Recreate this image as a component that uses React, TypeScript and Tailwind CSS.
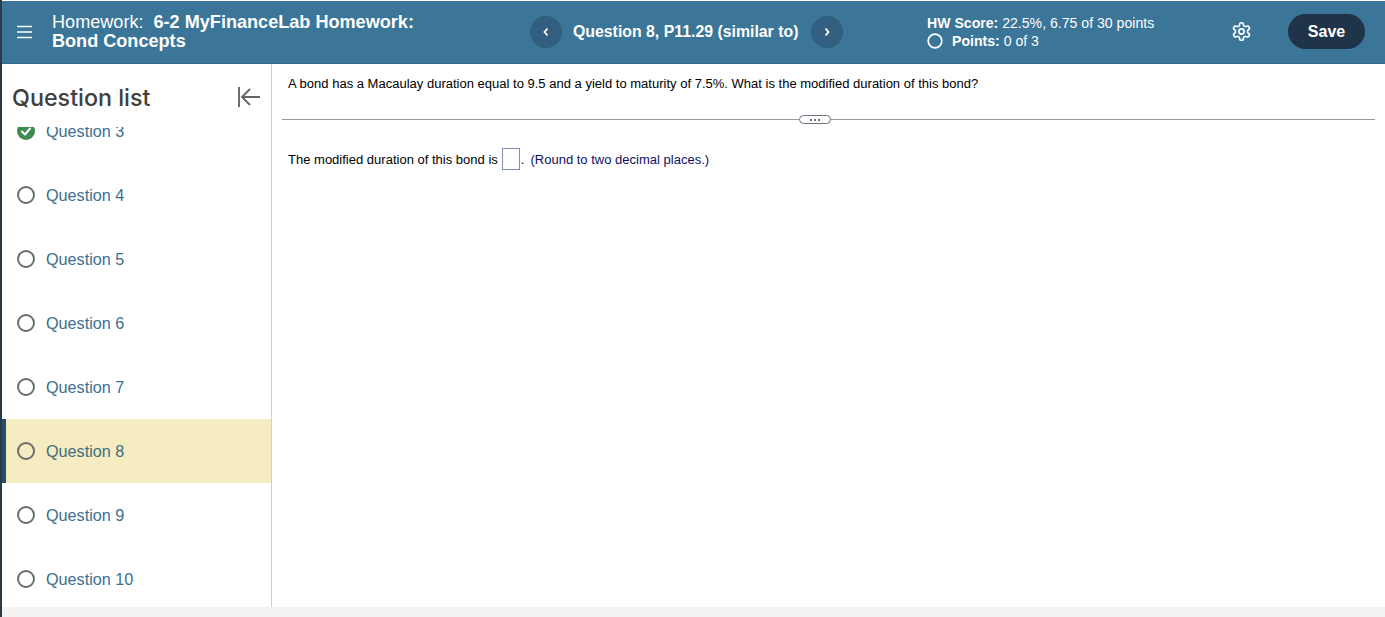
import React from "react";

const Circle = ({ color = "#6b6b6b" }: { color?: string }) => (
  <svg width="20" height="20" viewBox="0 0 20 20" fill="none" className="shrink-0">
    <circle cx="10" cy="10" r="8" stroke={color} strokeWidth="2" />
  </svg>
);

const Check = () => (
  <svg width="20" height="20" viewBox="0 0 20 20" className="shrink-0">
    <circle cx="10" cy="10" r="9" fill="#3d8b4f" />
    <path d="M6 10.5l3 3 5-6" fill="none" stroke="#fff" strokeWidth="2" strokeLinecap="round" strokeLinejoin="round" />
  </svg>
);

const Row = ({ n, active, done }: { n: number; active?: boolean; done?: boolean }) => (
  <div className={`h-16 shrink-0 flex items-center gap-[10px] pl-[14px] ${active ? "bg-[#f6ecc2]" : ""}`}>
    {done ? <Check /> : <Circle />}
    <span className={`text-[16.2px] pt-px ${active ? "text-[#3d6f7f]" : "text-[#3a708f]"}`}>Question {n}</span>
  </div>
);

export default function App() {
  return (
    <div className="h-[617px] w-[1385px] flex overflow-hidden bg-white text-black font-['Liberation_Sans',sans-serif]">
      <div className="w-[2px] shrink-0 bg-[#2b3a45]" />
      <div className="flex-1 min-w-0 flex flex-col">
        <header className="h-[63px] mt-px shrink-0 bg-[#3b7598] border-b border-[#356a8a] flex items-center text-white">
          <div className="w-[50px] shrink-0 flex justify-center pr-[6px]">
            <svg width="15" height="14" viewBox="0 0 15 14" stroke="#fff" strokeWidth="1.6" fill="none">
              <path d="M0 1.5h15M0 7h15M0 12.5h15" />
            </svg>
          </div>
          <div className="w-[478px] shrink-0 text-[18.1px] leading-[19px]">
            <div>
              Homework: <span className="font-bold ml-[5px]">6-2 MyFinanceLab Homework:</span>
            </div>
            <div className="font-bold">Bond Concepts</div>
          </div>
          <div className="flex items-center w-[397px] shrink-0">
            <div className="w-8 h-8 rounded-full bg-[#315f7d] flex items-center justify-center">
              <svg width="8" height="10" viewBox="0 0 8 10" fill="none" stroke="#fff" strokeWidth="1.8"><path d="M5.5 1.5L2.5 5l3 3.5" /></svg>
            </div>
            <div className="ml-[11px] w-[238px] text-[15.85px] font-bold whitespace-nowrap">Question 8, P11.29 (similar to)</div>
            <div className="w-8 h-8 rounded-full bg-[#315f7d] flex items-center justify-center">
              <svg width="8" height="10" viewBox="0 0 8 10" fill="none" stroke="#fff" strokeWidth="1.8"><path d="M2.5 1.5L5.5 5l-3 3.5" /></svg>
            </div>
          </div>
          <div className="w-[304px] shrink-0 text-[14.1px] leading-[18px]">
            <div><span className="font-bold">HW Score:</span> 22.5%, 6.75 of 30 points</div>
            <div className="flex items-center">
              <svg width="16" height="16" viewBox="0 0 16 16" fill="none" className="mr-[9px]"><circle cx="8" cy="8" r="6.8" stroke="#fff" strokeWidth="1.7" /></svg>
              <span className="font-bold">Points:</span>&nbsp;0 of 3
            </div>
          </div>
          <svg width="21" height="21" viewBox="0 0 24 24" fill="none" stroke="#fff" strokeWidth="1.9" strokeLinecap="round" strokeLinejoin="round" className="shrink-0 mb-px">
            <path d="M12.22 2h-.44a2 2 0 0 0-2 2v.18a2 2 0 0 1-1 1.73l-.43.25a2 2 0 0 1-2 0l-.15-.08a2 2 0 0 0-2.73.73l-.22.38a2 2 0 0 0 .73 2.73l.15.1a2 2 0 0 1 1 1.72v.51a2 2 0 0 1-1 1.74l-.15.09a2 2 0 0 0-.73 2.73l.22.38a2 2 0 0 0 2.73.73l.15-.08a2 2 0 0 1 2 0l.43.25a2 2 0 0 1 1 1.73V20a2 2 0 0 0 2 2h.44a2 2 0 0 0 2-2v-.18a2 2 0 0 1 1-1.73l.43-.25a2 2 0 0 1 2 0l.15.08a2 2 0 0 0 2.73-.73l.22-.39a2 2 0 0 0-.73-2.73l-.15-.08a2 2 0 0 1-1-1.74v-.5a2 2 0 0 1 1-1.74l.15-.09a2 2 0 0 0 .73-2.73l-.22-.38a2 2 0 0 0-2.73-.73l-.15.08a2 2 0 0 1-2 0l-.43-.25a2 2 0 0 1-1-1.73V4a2 2 0 0 0-2-2z" />
            <circle cx="12" cy="12" r="3" />
          </svg>
          <button className="ml-[36px] mb-px w-[77px] h-[35px] rounded-full bg-[#1f3448] text-white text-[16px] font-bold">Save</button>
        </header>
        <div className="flex-1 min-h-0 flex">
          <aside className="w-[270px] shrink-0 border-r border-[#cfcfcf] flex flex-col">
            <div className="h-[63px] shrink-0 flex items-start justify-between pl-[10px] pr-[9px] pt-[19px]">
              <h2 className="font-['Inter',sans-serif] text-[23.3px] leading-[30px] font-medium text-[#3f3f3f]">Question list</h2>
              <svg width="24" height="22" viewBox="0 0 24 22" fill="none" stroke="#666" strokeWidth="1.9" className="mt-[3px] mr-[1px]">
                <path d="M2 1v20M23 11H6M13 3l-8 8 8 8" />
              </svg>
            </div>
            <div className="flex-1 min-h-0 overflow-hidden flex flex-col">
              <div className="-mt-[28px] flex flex-col">
                <Row n={3} done />
                <Row n={4} />
                <Row n={5} />
                <Row n={6} />
                <Row n={7} />
                <div className="relative">
                  <div className="absolute left-0 top-0 bottom-0 w-1 bg-[#24506e]" />
                  <Row n={8} active />
                </div>
                <Row n={9} />
                <Row n={10} />
              </div>
            </div>
          </aside>
          <main className="flex-1 min-w-0 pl-[10px] pr-[10px] text-[13.02px]">
            <p className="pl-[6px] pt-[11px] leading-[17px]">A bond has a Macaulay duration equal to 9.5 and a yield to maturity of 7.5%. What is the modified duration of this bond?</p>
            <div className="relative mt-[27px] h-px bg-[#9a9a9a]">
              <div className="absolute left-[517px] -top-[4px] w-8 h-[9px] rounded-full border border-[#6b7280] bg-white flex items-center justify-center gap-[2px]">
                <span className="w-[2px] h-[2px] rounded-full bg-[#444]" />
                <span className="w-[2px] h-[2px] rounded-full bg-[#444]" />
                <span className="w-[2px] h-[2px] rounded-full bg-[#444]" />
              </div>
            </div>
            <div className="pl-[6px] mt-[28px] flex items-center h-[22px]">
              <span className="pt-px">The modified duration of this bond is</span>
              <span className="ml-[4px] w-[18px] h-[22px] border border-[#7f90b8] bg-white" />
              <span className="ml-px pt-px">.</span>
              <span className="ml-[6px] pt-px text-[#10105f]">(Round to two decimal places.)</span>
            </div>
          </main>
        </div>
        <div className="h-[10px] shrink-0 bg-[#f2f2f2]" />
      </div>
    </div>
  );
}
